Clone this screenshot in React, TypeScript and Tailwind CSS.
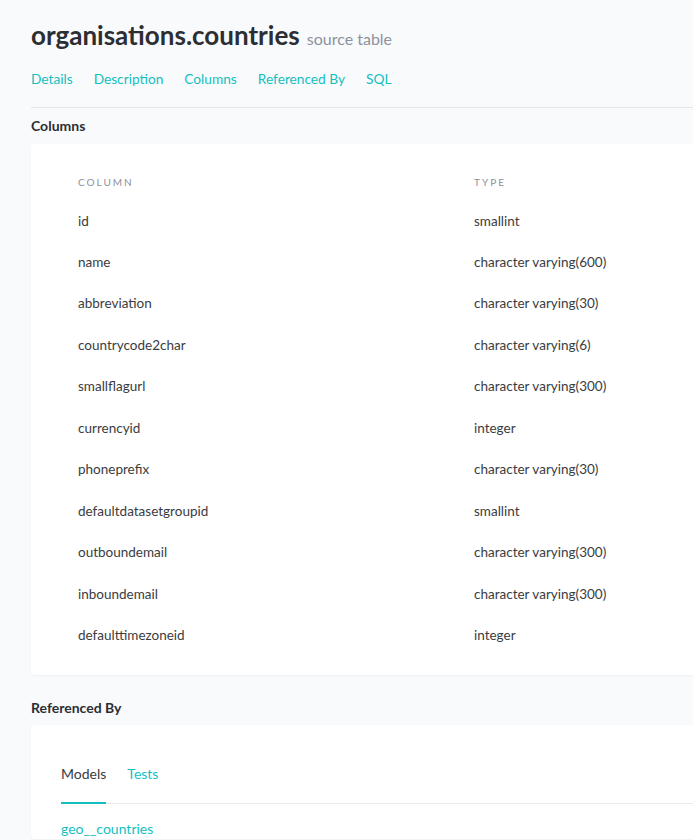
const rows: [string, string][] = [
  ['id', 'smallint'],
  ['name', 'character varying(600)'],
  ['abbreviation', 'character varying(30)'],
  ['countrycode2char', 'character varying(6)'],
  ['smallflagurl', 'character varying(300)'],
  ['currencyid', 'integer'],
  ['phoneprefix', 'character varying(30)'],
  ['defaultdatasetgroupid', 'smallint'],
  ['outboundemail', 'character varying(300)'],
  ['inboundemail', 'character varying(300)'],
  ['defaulttimezoneid', 'integer'],
]

const navLinks = ['Details', 'Description', 'Columns', 'Referenced By', 'SQL']

export default function App() {
  return (
    <div className="h-[840px] w-[693px] overflow-hidden bg-[#f9fafc] font-['Lato','Open_Sans',sans-serif] text-[#2c2e33]">
      <div className="w-[1000px] pl-[31px]">
        <div className="flex items-baseline gap-[7px] pt-[18px]">
          <h1 className="text-[26px] font-bold leading-[34px]">organisations.countries</h1>
          <span className="text-[16px] text-[#8d929c]">source table</span>
        </div>
        <nav className="flex gap-[21px] pt-[17px] text-[13.7px] leading-[20px] text-[#14bfbf]">
          {navLinks.map((l) => (
            <a key={l} href="#">
              {l}
            </a>
          ))}
        </nav>
        <div className="mt-[18px] border-t border-[#e3e5e9]" />

        <h2 className="pt-[9px] text-[14px] font-bold leading-[18px]">Columns</h2>
        <section className="mt-[9px] rounded-[4px] bg-white pb-[19px] pl-[47px] pt-[31px] shadow-[0_1px_2px_rgba(0,0,0,0.04)]">
          <div className="grid grid-cols-[396px_1fr] text-[10px] uppercase tracking-[0.2em] text-[#8b919b]">
            <span>Column</span>
            <span>Type</span>
          </div>
          <div className="pt-[10px]">
            {rows.map(([c, t]) => (
              <div key={c} className="grid h-[41.45px] grid-cols-[396px_1fr] items-center text-[13.5px] text-[#3a3c41]">
                <span>{c}</span>
                <span>{t}</span>
              </div>
            ))}
          </div>
        </section>

        <h2 className="pt-[24px] text-[14px] font-bold leading-[18px]">Referenced By</h2>
        <section className="mt-[8px] rounded-[4px] bg-white pl-[30px] pt-[38px] shadow-[0_1px_2px_rgba(0,0,0,0.04)]">
          <div className="flex gap-[21px] border-b border-[#e8eaed] text-[14px]">
            <span className="-mb-px border-b-2 border-[#14bfbf] pb-[18px] text-[#3a3c41]">Models</span>
            <span className="text-[#14bfbf]">Tests</span>
          </div>
          <div className="pt-[14px] text-[14px] text-[#14bfbf]">geo__countries</div>
        </section>
      </div>
    </div>
  )
}
